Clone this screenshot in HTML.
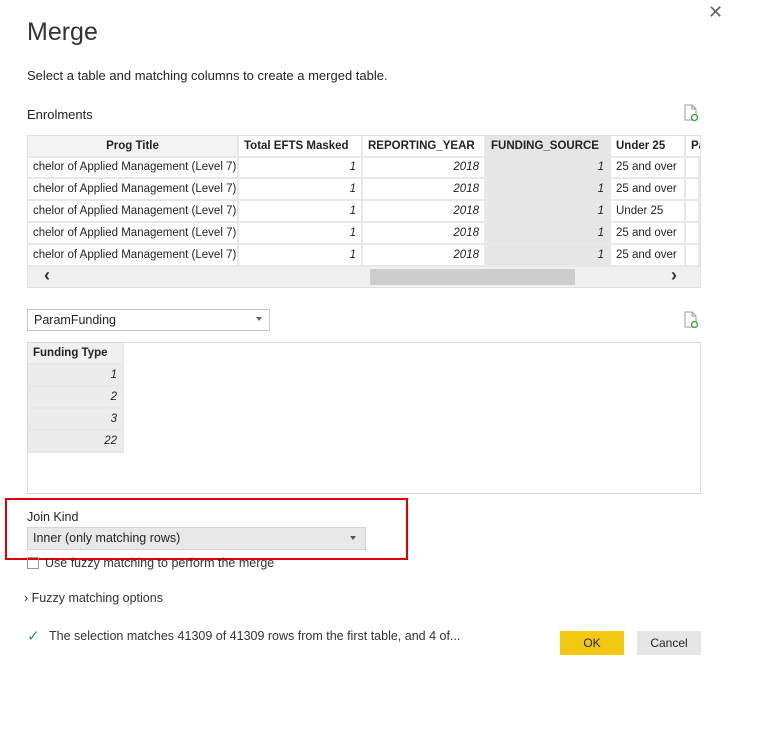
<!DOCTYPE html>
<html><head><meta charset="utf-8"><style>
*{margin:0;padding:0;box-sizing:border-box}
body{width:772px;height:750px;background:#fff;font-family:"Liberation Sans",sans-serif;color:#252423;position:relative;overflow:hidden}
.a{position:absolute;white-space:nowrap}
.t{font-size:12px}
.c{position:absolute;border-right:2px solid #e8e8e8;border-bottom:2px solid #e8e8e8;font-size:11.5px;line-height:20px;padding:0 5px;overflow:hidden;white-space:nowrap}
.h{font-weight:bold;background:#f3f3f3}
.r{text-align:right;font-style:italic}
.g{background:#e6e6e6}
</style></head><body>
<div class="a" style="left:708px;top:2px;font-size:18px;color:#666">✕</div>
<div class="a" style="left:27px;top:18px;font-size:25px;color:#333">Merge</div>
<div class="a" style="left:27px;top:68px;font-size:13px">Select a table and matching columns to create a merged table.</div>
<div class="a" style="left:27px;top:107px;font-size:13px">Enrolments</div>
<svg class="a" style="left:683px;top:104px" width="16" height="18" viewBox="0 0 16 18"><path d="M2 1h7l4 4v11H2z" fill="#fff" stroke="#999"/><path d="M9 1v4h4" fill="none" stroke="#999"/><circle cx="11.5" cy="13.5" r="3" fill="#fff" stroke="#3a9a3a" stroke-width="1.3"/></svg>
<svg class="a" style="left:683px;top:311px" width="16" height="18" viewBox="0 0 16 18"><path d="M2 1h7l4 4v11H2z" fill="#fff" stroke="#999"/><path d="M9 1v4h4" fill="none" stroke="#999"/><circle cx="11.5" cy="13.5" r="3" fill="#fff" stroke="#3a9a3a" stroke-width="1.3"/></svg>

<div class="a" style="left:27px;top:135px;width:674px;height:153px;border:1px solid #e0e0e0;overflow:hidden">
<div class="c h" style="left:0;top:0;width:211px;height:22px;text-align:center">Prog Title</div>
<div class="c h" style="left:211px;top:0;width:124px;height:22px;background:#fff">Total EFTS Masked</div>
<div class="c h" style="left:335px;top:0;width:123px;height:22px;background:#fff">REPORTING_YEAR</div>
<div class="c h g" style="left:458px;top:0;width:125px;height:22px">FUNDING_SOURCE</div>
<div class="c h" style="left:583px;top:0;width:75px;height:22px;background:#fff">Under 25</div>
<div class="c h" style="left:658px;top:0;width:30px;height:22px;background:#fff">Pa</div>
</div>
<div id="rows"></div>
<div class="a" style="left:28px;top:267px;width:672px;height:20px;background:#f0f0f0"></div>
<div class="a" style="left:370px;top:269px;width:205px;height:16px;background:#cdcdcd"></div>
<div class="a" style="left:44px;top:265px;font-size:18px;font-weight:bold;color:#333">‹</div>
<div class="a" style="left:671px;top:265px;font-size:18px;font-weight:bold;color:#333">›</div>

<div class="a" style="left:27px;top:309px;width:243px;height:22px;border:1px solid #c8c8c8;font-size:12.5px;line-height:20px;padding-left:6px">ParamFunding</div>
<div class="a" style="left:256px;top:317px;border:3px solid transparent;border-top:4px solid #666"></div>

<div class="a" style="left:27px;top:342px;width:674px;height:152px;border:1px solid #d8d8d8"></div>
<div class="c h" style="left:28px;top:343px;width:96px;height:22px;background:#f0f0f0">Funding Type</div>
<div class="c r g" style="left:28px;top:365px;width:96px;height:22px;background:#ececec">1</div>
<div class="c r g" style="left:28px;top:387px;width:96px;height:22px;background:#ececec">2</div>
<div class="c r g" style="left:28px;top:409px;width:96px;height:22px;background:#ececec">3</div>
<div class="c r g" style="left:28px;top:431px;width:96px;height:22px;background:#ececec">22</div>

<div class="a" style="left:5px;top:498px;width:403px;height:62px;border:2px solid #e00000"></div>
<div class="a" style="left:27px;top:510px;font-size:12.5px">Join Kind</div>
<div class="a" style="left:27px;top:527px;width:339px;height:23px;background:#e8e8e8;border:1px solid #d4d4d4;font-size:12.5px;line-height:21px;padding-left:5px">Inner (only matching rows)</div>
<div class="a" style="left:350px;top:536px;border:3px solid transparent;border-top:4px solid #555"></div>
<div class="a" style="left:27px;top:557px;width:12px;height:12px;border:1px solid #999"></div>
<div class="a" style="left:45px;top:556px;font-size:12.5px;color:#333">Use fuzzy matching to perform the merge</div>
<div class="a" style="left:24px;top:591px;font-size:12.5px;color:#333">› Fuzzy matching options</div>
<div class="a" style="left:27px;top:627px;font-size:15px;color:#2f9a4a">✓</div>
<div class="a" style="left:49px;top:629px;font-size:12.5px;color:#333">The selection matches 41309 of 41309 rows from the first table, and 4 of...</div>
<div class="a" style="left:560px;top:631px;width:64px;height:24px;background:#f2c811;font-size:12px;text-align:center;line-height:24px">OK</div>
<div class="a" style="left:637px;top:631px;width:64px;height:24px;background:#e6e6e6;font-size:12px;text-align:center;line-height:24px">Cancel</div>

<div class="c" style="left:28px;top:157px;width:211px;height:22px">chelor of Applied Management (Level 7)</div>
<div class="c" style="left:28px;top:179px;width:211px;height:22px">chelor of Applied Management (Level 7)</div>
<div class="c" style="left:28px;top:201px;width:211px;height:22px">chelor of Applied Management (Level 7)</div>
<div class="c" style="left:28px;top:223px;width:211px;height:22px">chelor of Applied Management (Level 7)</div>
<div class="c" style="left:28px;top:245px;width:211px;height:22px">chelor of Applied Management (Level 7)</div>
<div class="c r" style="left:239px;top:157px;width:124px;height:22px">1</div>
<div class="c r" style="left:239px;top:179px;width:124px;height:22px">1</div>
<div class="c r" style="left:239px;top:201px;width:124px;height:22px">1</div>
<div class="c r" style="left:239px;top:223px;width:124px;height:22px">1</div>
<div class="c r" style="left:239px;top:245px;width:124px;height:22px">1</div>
<div class="c r" style="left:363px;top:157px;width:123px;height:22px">2018</div>
<div class="c r" style="left:363px;top:179px;width:123px;height:22px">2018</div>
<div class="c r" style="left:363px;top:201px;width:123px;height:22px">2018</div>
<div class="c r" style="left:363px;top:223px;width:123px;height:22px">2018</div>
<div class="c r" style="left:363px;top:245px;width:123px;height:22px">2018</div>
<div class="c r g" style="left:486px;top:157px;width:125px;height:22px">1</div>
<div class="c r g" style="left:486px;top:179px;width:125px;height:22px">1</div>
<div class="c r g" style="left:486px;top:201px;width:125px;height:22px">1</div>
<div class="c r g" style="left:486px;top:223px;width:125px;height:22px">1</div>
<div class="c r g" style="left:486px;top:245px;width:125px;height:22px">1</div>
<div class="c" style="left:611px;top:157px;width:75px;height:22px">25 and over</div>
<div class="c" style="left:611px;top:179px;width:75px;height:22px">25 and over</div>
<div class="c" style="left:611px;top:201px;width:75px;height:22px">Under 25</div>
<div class="c" style="left:611px;top:223px;width:75px;height:22px">25 and over</div>
<div class="c" style="left:611px;top:245px;width:75px;height:22px">25 and over</div>
<div class="c" style="left:686px;top:157px;width:14px;height:22px"></div>
<div class="c" style="left:686px;top:179px;width:14px;height:22px"></div>
<div class="c" style="left:686px;top:201px;width:14px;height:22px"></div>
<div class="c" style="left:686px;top:223px;width:14px;height:22px"></div>
<div class="c" style="left:686px;top:245px;width:14px;height:22px"></div>
</body></html>
